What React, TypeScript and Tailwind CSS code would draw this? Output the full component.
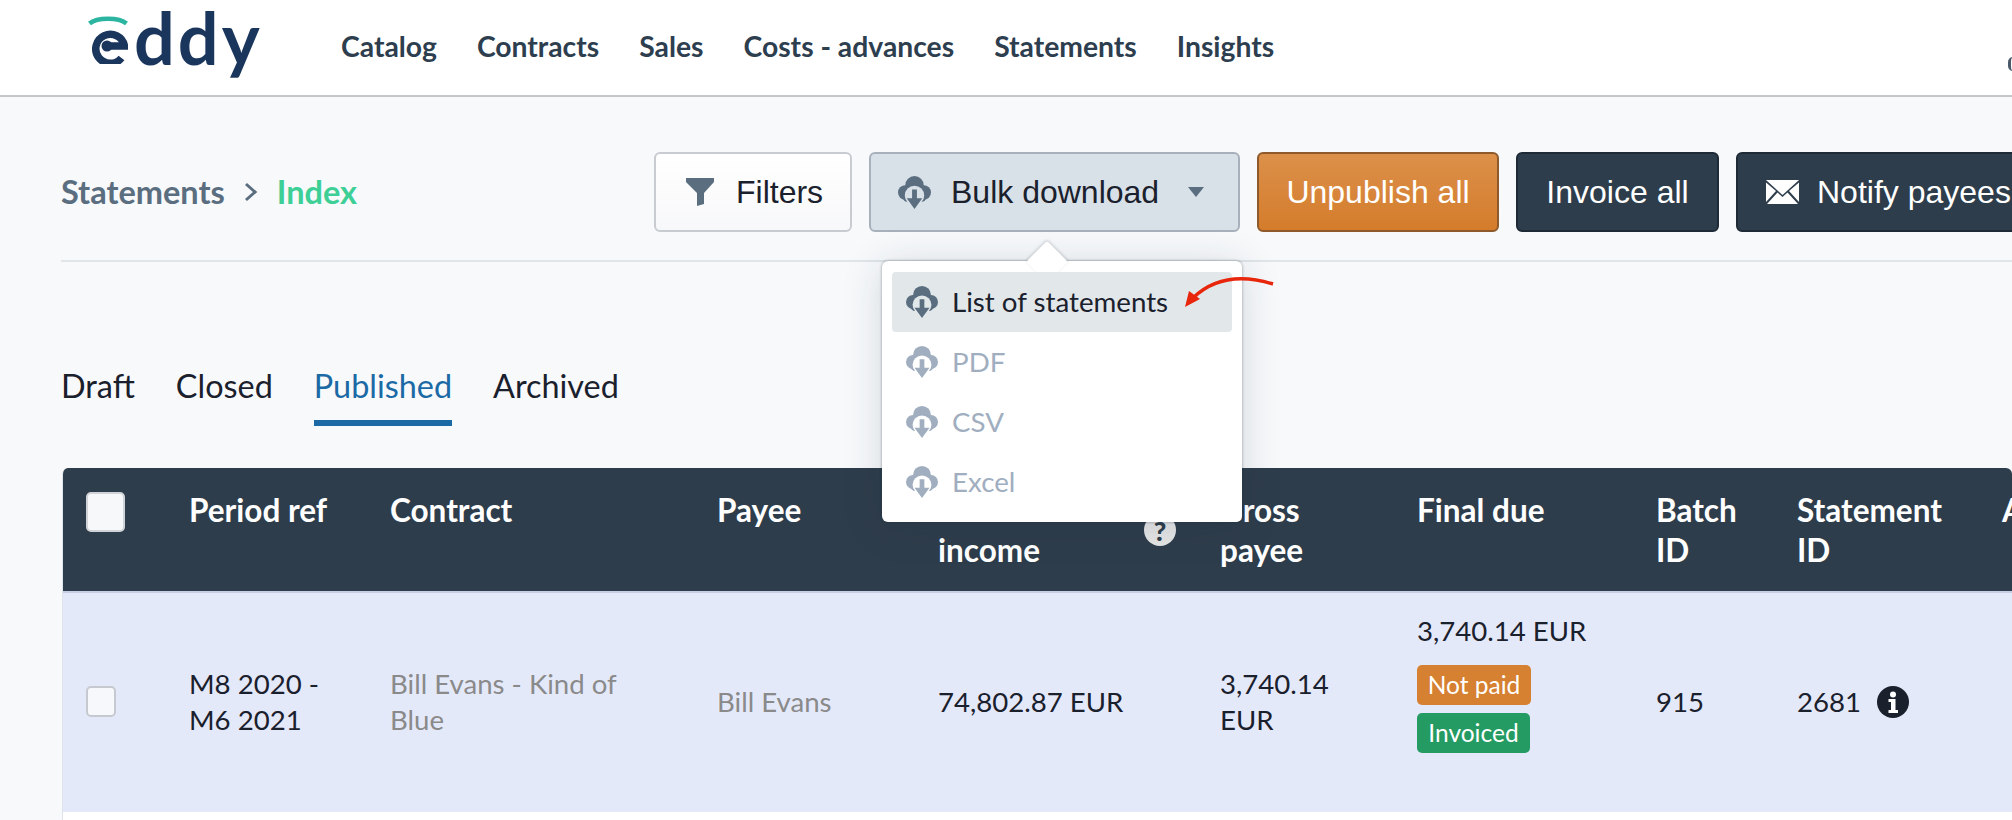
import { useId } from "react";

const lato = "font-['Lato',sans-serif]";
const tableCols = "grid-cols-[126px_201px_327px_221px_282px_197px_239px_141px_205px_100px]";

function CloudDownload({ className }: { className: string }) {
  const maskId = useId();
  return (
    <svg viewBox="0 0 34 34" className={className} fill="currentColor">
      <mask id={maskId}>
        <rect width="34" height="34" fill="#fff" />
        <circle cx="17" cy="20" r="10" fill="#000" />
      </mask>
      <g mask={`url(#${maskId})`}>
        <circle cx="17" cy="9.500" r="9.500" />
        <circle cx="7.500" cy="17" r="7.500" />
        <circle cx="26.500" cy="17" r="7.500" />
        <rect x="7" y="10" width="20" height="14" />
        <circle cx="9.500" cy="22" r="4.500" />
        <circle cx="24.500" cy="22" r="4.500" />
      </g>
      <path d="M14.500 14h5v9h5.500L17 34 9 23h5.500z" />
    </svg>
  );
}

function NavItem({ label }: { label: string }) {
  return <a className="text-[28.300px] font-bold text-[#2d3e4f]">{label}</a>;
}

function Button({ className, children }: { className: string; children: React.ReactNode }) {
  return (
    <button className={`flex h-[80px] shrink-0 items-center rounded-[6px] border-2 font-['Liberation_Sans',sans-serif] text-[32px] ${className}`}>
      {children}
    </button>
  );
}

function HeaderCell({ children }: { children: React.ReactNode }) {
  return <div className="pt-[22px] text-[31.500px] leading-[40px] font-bold text-white">{children}</div>;
}

function MenuItem({ label, active }: { label: string; active?: boolean }) {
  return (
    <div className={`flex h-[60px] items-center gap-[14px] rounded-[4px] pl-[14px] text-[27.700px] ${active ? "bg-[#e2e7ea] text-[#1a202c]" : "text-[#a0aec0]"}`}>
      <CloudDownload className={`h-[32px] w-[32px] ${active ? "text-[#5a6e80]" : "text-[#a0aec0]"}`} />
      {label}
    </div>
  );
}

export default function App() {
  return (
    <div className={`relative h-[820px] w-[2012px] overflow-hidden bg-[#f7f9fb] ${lato}`}>
      {/* top nav */}
      <header className="flex h-[97px] items-center border-b-2 border-[#c4c7ca] bg-white">
        <div className="ml-[88px] flex h-[63px] w-[253px] shrink-0 items-start">
          <svg viewBox="0 0 40 48" className="h-[48px] w-[40px] shrink-0">
            <path d="M1.500 7.500C9 1 31 1 38.500 7.500" fill="none" stroke="#2bb5a0" strokeWidth="4.500" />
            <path d="M33.500 42a14.500 14.500 0 1 1 3-12H20" fill="none" stroke="#1b365d" strokeWidth="7.500" />
            <circle cx="19" cy="30" r="5.500" fill="#1b365d" />
          </svg>
          <span className="mt-[-15px] ml-[6px] text-[72px] leading-none font-bold tracking-[3px] text-[#1b365d]">ddy</span>
        </div>
        <nav className="mt-[-2px] flex gap-[40px]">
          <NavItem label="Catalog" />
          <NavItem label="Contracts" />
          <NavItem label="Sales" />
          <NavItem label="Costs - advances" />
          <NavItem label="Statements" />
          <NavItem label="Insights" />
        </nav>
      </header>
      {/* sliver of the account control cut by the window edge */}
      <div className="absolute top-[57px] left-[2008px] h-[14px] w-[10px] rounded-full border-l-[3px] border-[#4a5a6a]" />

      {/* page title + actions */}
      <div className="ml-[61px] flex h-[165px] items-start border-b-2 border-[#dfe5e8]">
        <div className="mt-[72px] flex w-[593px] shrink-0 items-center text-[32.500px] leading-[46px] font-bold">
          <span className="text-[#5a6e80]">Statements</span>
          <svg viewBox="0 0 14 20" className="mx-[19px] h-[20px] w-[14px]" fill="none" stroke="#5a6e80" strokeWidth="3">
            <path d="M2 2l9 8-9 8" />
          </svg>
          <span className="text-[#3ecf96]">Index</span>
        </div>
        <div className="mt-[55px] flex gap-[17px]">
          <Button className="w-[198px] gap-[22px] border-[#c8ccd0] bg-gradient-to-b from-white to-[#f7f8f9] pl-[30px] text-[#1a202c]">
            <svg viewBox="0 0 28 28" className="h-[28px] w-[28px]" fill="#5a6e80">
              <path d="M0 0h28v4L18 15v11l-7 2V15L0 4z" />
            </svg>
            Filters
          </Button>
          <Button className="w-[371px] border-[#a8b1bb] bg-[#d8e0e8] pl-[27px] text-[#1a202c]">
            <CloudDownload className="h-[33px] w-[33px] text-[#5a6e80]" />
            <span className="ml-[20px]">Bulk download</span>
            <svg viewBox="0 0 16 10" className="ml-[29px] h-[10px] w-[16px]" fill="#5a6e80">
              <path d="M0 0h16L8 10z" />
            </svg>
          </Button>
          <Button className="w-[242px] justify-center border-[#8f5a2b] bg-gradient-to-b from-[#dc9049] to-[#d47c2b] text-white">
            Unpublish all
          </Button>
          <Button className="w-[203px] justify-center border-[#1e2a35] bg-[#2e3d4b] text-white">
            Invoice all
          </Button>
          <Button className="w-[300px] gap-[18px] border-[#1e2a35] bg-[#2e3d4b] pl-[28px] text-white">
            <svg viewBox="0 0 33 24" className="h-[24px] w-[33px]" fill="#fff">
              <path d="M0 0h33L16.500 15z" />
              <path d="M0 2.500V22l10-11zM33 2.500V22L23 11zM1 24l10.500-11.500 5 4.500 5-4.500L32 24z" />
            </svg>
            Notify payees
          </Button>
        </div>
      </div>

      {/* tabs */}
      <div className="ml-[61px] flex h-[206px] items-start gap-[41px] pt-[100px] text-[32.400px] text-[#1a202c]">
        <span>Draft</span>
        <span>Closed</span>
        <span className="h-[64px] border-b-[6px] border-[#1b6aa5] text-[#1b6aa5]">Published</span>
        <span>Archived</span>
      </div>

      {/* table */}
      <div className="ml-[62px] overflow-hidden rounded-t-[6px] border-l border-[#dfe3ea]">
        <div className={`grid h-[125px] ${tableCols} border-b-2 border-[#c7cde4] bg-[#2e3d4b]`}>
          <div className="pt-[24px] pl-[23px]">
            <div className="h-[40px] w-[39px] rounded-[5px] border-2 border-[#d0d4d8] bg-[#f7f8f9]" />
          </div>
          <HeaderCell>Period ref</HeaderCell>
          <HeaderCell>Contract</HeaderCell>
          <HeaderCell>Payee</HeaderCell>
          <HeaderCell>
            <div className="relative">
              Gross
              <br />
              income
              <span className="absolute top-[24px] left-[206px] flex h-[32px] w-[32px] items-center justify-center rounded-full bg-[#e6e6e6] text-[27px] leading-none font-black text-[#2e3d4b]">?</span>
            </div>
          </HeaderCell>
          <HeaderCell>Gross<br />payee</HeaderCell>
          <HeaderCell>Final due</HeaderCell>
          <HeaderCell>Batch<br />ID</HeaderCell>
          <HeaderCell>Statement<br />ID</HeaderCell>
          <HeaderCell>Actions</HeaderCell>
        </div>
        <div className={`grid h-[219px] ${tableCols} items-center bg-[#e4e9fa] pb-[2px] text-[27.600px] leading-[36px] text-[#1a202c]`}>
          <div className="pl-[23px]">
            <div className="h-[31px] w-[30px] rounded-[5px] border-2 border-[#c6c9d0] bg-[#f7f8fb]" />
          </div>
          <div>M8 2020 -<br />M6 2021</div>
          <div className="w-[250px] text-[#8a8a8a]">Bill Evans - Kind of Blue</div>
          <div className="text-[#8a8a8a]">Bill Evans</div>
          <div>74,802.87 EUR</div>
          <div className="w-[120px]">3,740.14 EUR</div>
          <div className="flex flex-col items-start gap-[8px] self-start pt-[20px]">
            <span className="mb-[8px]">3,740.14 EUR</span>
            <span className="flex h-[40px] w-[114px] items-center justify-center rounded-[5px] bg-[#d68031] text-[24.500px] text-white">Not paid</span>
            <span className="flex h-[40px] w-[113px] items-center justify-center rounded-[5px] bg-[#249b63] text-[24.500px] text-white">Invoiced</span>
          </div>
          <div>915</div>
          <div className="flex items-center gap-[16px]">
            2681
            <svg viewBox="0 0 32 32" className="h-[32px] w-[32px]">
              <circle cx="16" cy="16" r="16" fill="#1a202c" />
              <circle cx="16" cy="8.500" r="3" fill="#fff" />
              <path d="M11.500 13h7v11h2.500v3H11.500v-3H14v-8h-2.500z" fill="#fff" />
            </svg>
          </div>
          <div />
        </div>
        <div className="h-[20px] bg-white" />
      </div>

      {/* bulk download dropdown */}
      <div className="absolute top-[261px] left-[882px] h-[261px] w-[360px] rounded-[6px] bg-white p-[10px] pt-[11px] shadow-[0_0_3px_rgba(30,45,60,0.45),0_4px_40px_rgba(30,45,60,0.16)]">
        <div className="absolute top-[-14px] left-[150px] h-[30px] w-[30px] rotate-45 rounded-[3px] bg-white shadow-[-1px_-1px_3px_rgba(30,45,60,0.2)]" />
        <div className="relative">
          <MenuItem label="List of statements" active />
          <MenuItem label="PDF" />
          <MenuItem label="CSV" />
          <MenuItem label="Excel" />
        </div>
      </div>

      {/* red annotation arrow */}
      <svg viewBox="0 0 100 40" className="absolute top-[274px] left-[1178px] h-[40px] w-[100px]" fill="none">
        <path d="M95 10C72 3 40 0 15 24" stroke="#e8260c" strokeWidth="3.500" />
        <path d="M7 33l4-16 11 8z" fill="#e8260c" />
      </svg>
    </div>
  );
}
